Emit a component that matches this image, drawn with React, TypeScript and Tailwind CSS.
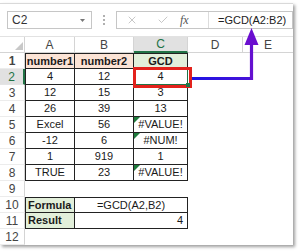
import { Check, X } from 'lucide-react'

const rows = [
  { a: '4', b: '12', c: '4', flag: false },
  { a: '12', b: '15', c: '3', flag: false },
  { a: '26', b: '39', c: '13', flag: false },
  { a: 'Excel', b: '56', c: '#VALUE!', flag: true },
  { a: '-12', b: '6', c: '#NUM!', flag: true },
  { a: '1', b: '919', c: '1', flag: false },
  { a: 'TRUE', b: '23', c: '#VALUE!', flag: true },
]

function RowHead({ n, active }: { readonly n: number; readonly active?: boolean }) {
  return (
    <div
      className={
        active
          ? 'flex h-full w-[25px] shrink-0 items-center justify-center border-r-2 border-b border-r-[#217346] border-b-[#e4e4e4] bg-[#e1e1e1] text-[12px] text-[#217346]'
          : 'flex h-full w-[25px] shrink-0 items-center justify-center border-r border-b border-r-[#d4d4d4] border-b-[#ececec] text-[12px] text-[#444]'
      }
    >
      {n}
    </div>
  )
}

function ErrorFlag() {
  return (
    <svg className="absolute left-0 top-0" width="6" height="6" viewBox="0 0 6 6" aria-hidden="true">
      <polygon points="0,0 6,0 0,6" fill="#1e7b3c" />
    </svg>
  )
}

export default function App() {
  return (
    <div className="relative h-[252px] w-[300px] overflow-hidden bg-white font-['Liberation_Sans',Arial,sans-serif] text-[#1a1a1a]">
      <div className="mt-[3px] h-[242px] w-[293px] overflow-hidden border-t border-[#d9d9d9] bg-white pt-[7px] shadow-[2px_2px_3px_rgba(0,0,0,0.38)]">
        {/* formula bar */}
        <div className="flex h-[18px] items-center">
          <div className="ml-[7px] flex h-[18px] w-[85px] items-center justify-between border border-[#c6c6c6] pl-[4px] pr-[6px] text-[12px] text-[#333]">
            <span>C2</span>
            <svg width="5" height="3" viewBox="0 0 5 3" aria-hidden="true">
              <polygon points="0,0 5,0 2.5,3" fill="#777" />
            </svg>
          </div>
          <div className="flex w-[24px] flex-col items-center justify-center gap-[2px]">
            <span className="h-[2px] w-[2px] bg-[#b0b0b0]" />
            <span className="h-[2px] w-[2px] bg-[#b0b0b0]" />
            <span className="h-[2px] w-[2px] bg-[#b0b0b0]" />
          </div>
          <div className="flex h-[18px] flex-1 border border-[#c6c6c6]">
            <div className="flex w-[91px] items-center">
              <X className="ml-[9px] text-[#a8a8a8]" size={12} strokeWidth={1.3} />
              <Check className="ml-[19px] text-[#a8a8a8]" size={12} strokeWidth={1.3} />
              <span className="ml-[11px] font-['Liberation_Serif',serif] text-[12px] italic text-[#555]">fx</span>
            </div>
            <div className="flex flex-1 items-center border-l border-[#dcdcdc] pl-[9px] text-[11px] text-[#222]">
              =GCD(A2:B2)
            </div>
          </div>
        </div>

        {/* grid */}
        <div className="mt-[7px]">
          <div className="flex h-[17px] border-t border-[#e2e2e2] text-[12px] text-[#444]">
            <div className="relative w-[25px] shrink-0 border-r border-b border-[#d4d4d4]">
              <svg className="absolute left-[15px] top-[5px]" width="8" height="8" viewBox="0 0 8 8" aria-hidden="true">
                <polygon points="8,0 8,8 0,8" fill="#c8c8c8" />
              </svg>
            </div>
            <div className="flex w-[50px] items-center justify-center border-r border-b border-[#d4d4d4]">A</div>
            <div className="flex w-[59px] items-center justify-center border-r border-b border-[#d4d4d4]">B</div>
            <div className="flex w-[54px] items-center justify-center border-r border-[#d4d4d4] border-b-2 border-b-[#217346] bg-[#e1e1e1] text-[#217346]">
              C
            </div>
            <div className="flex w-[55px] items-center justify-center border-r border-b border-[#d4d4d4]">D</div>
            <div className="flex flex-1 items-center justify-center border-b border-[#d4d4d4]">E</div>
          </div>

          <div className="flex h-[16px] text-[11px] font-bold">
            <RowHead n={1} />
            <div className="flex w-[50px] items-center justify-center border border-[#222] bg-[#fce4d6]">number1</div>
            <div className="flex w-[59px] items-center justify-center border-y border-r border-[#222] bg-[#fce4d6]">number2</div>
            <div className="flex w-[54px] items-center justify-center border-y border-r border-[#222] bg-[#e2efda]">GCD</div>
          </div>

          {rows.map((r, i) => (
            <div key={i} className="flex h-[16px] text-[11px]">
              <RowHead n={i + 2} active={i === 0} />
              <div className="flex w-[50px] items-center justify-center border-x border-b border-[#222]">{r.a}</div>
              <div className="flex w-[59px] items-center justify-center border-r border-b border-[#222]">{r.b}</div>
              <div className="relative flex w-[54px] items-center justify-center border-r border-b border-[#222]">
                {r.flag ? <ErrorFlag /> : null}
                {r.c}
              </div>
            </div>
          ))}

          <div className="flex h-[16px]">
            <RowHead n={9} />
          </div>

          <div className="flex h-[16px] text-[11px]">
            <RowHead n={10} />
            <div className="flex w-[50px] items-center border border-[#222] bg-[#e2efda] pl-[2px] font-bold">Formula</div>
            <div className="flex w-[113px] items-center justify-center border-y border-r border-[#222]">=GCD(A2,B2)</div>
          </div>
          <div className="flex h-[16px] text-[11px]">
            <RowHead n={11} />
            <div className="flex w-[50px] items-center border-x border-b border-[#222] bg-[#e2efda] pl-[2px] font-bold">Result</div>
            <div className="flex w-[113px] items-center justify-end border-r border-b border-[#222] pr-[4px]">4</div>
          </div>
          <div className="flex h-[16px]">
            <RowHead n={12} />
          </div>
        </div>
      </div>

      {/* selection + callout overlays */}
      <div className="absolute left-[134px] top-[69px] h-[16px] w-[54px] border border-[#217346]" />
      <div className="absolute left-[133px] top-[67px] h-[21px] w-[59px] border-[3px] border-[#e3221c]" />
      <div className="absolute left-[186px] top-[83px] h-[4px] w-[4px] bg-[#217346]" />

      <svg className="pointer-events-none absolute left-0 top-0" width="300" height="252" viewBox="0 0 300 252" aria-hidden="true">
        <defs>
          <linearGradient id="hz" x1="190" y1="0" x2="253" y2="0" gradientUnits="userSpaceOnUse">
            <stop offset="0" stopColor="#1c14e4" />
            <stop offset="1" stopColor="#4a12d8" />
          </linearGradient>
        </defs>
        <line x1="192" y1="78.5" x2="253" y2="78.5" stroke="url(#hz)" strokeWidth="3" />
        <line x1="251.5" y1="80" x2="251.5" y2="43" stroke="#6410cf" strokeWidth="3.2" />
        <polygon points="251.5,28 244.5,45 258.5,45" fill="#6a0ecf" />
      </svg>
    </div>
  )
}
